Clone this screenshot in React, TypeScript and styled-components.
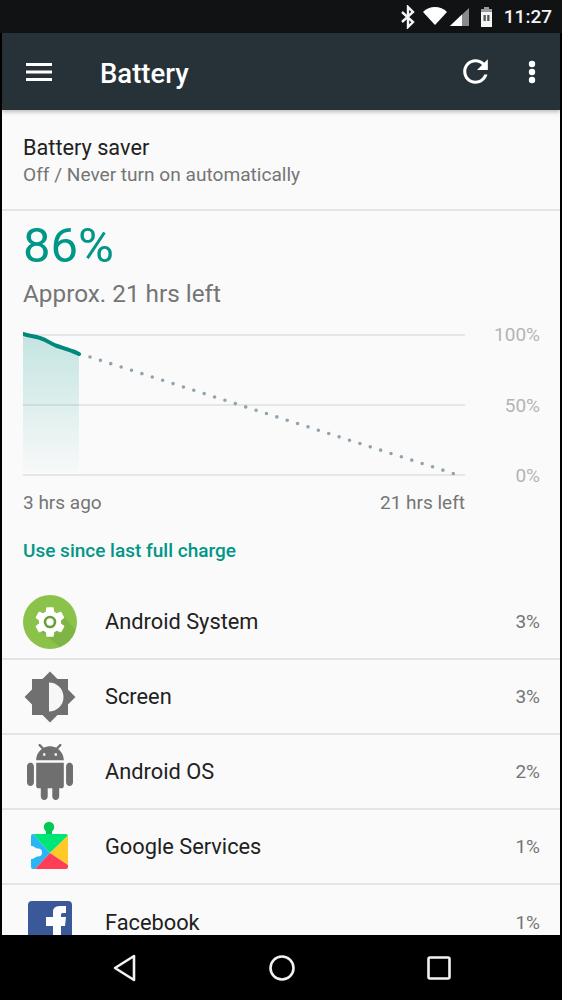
import * as React from 'react';
import styled, { createGlobalStyle } from 'styled-components';

const GlobalStyle = createGlobalStyle`
  html, body {
    margin: 0;
    padding: 0;
    background: #000;
  }
  body {
    font-family: Roboto, "Noto Sans", sans-serif;
  }
`;

const Screen = styled.div`
  width: 562px;
  height: 1000px;
  display: flex;
  flex-direction: column;
  overflow: hidden;
  background: #000;
`;

const StatusBar = styled.div`
  height: 33px;
  flex-shrink: 0;
  padding: 0 10px 0 0;
  display: flex;
  justify-content: flex-end;
  align-items: center;
  background: #101214;
  color: #f4f4f4;
`;

const StatusIcon = styled.svg<{ $gap?: number }>`
  display: block;
  margin-right: ${({ $gap }) => $gap ?? 0}px;
`;

const Clock = styled.span`
  font-size: 19px;
  font-weight: 500;
  margin-left: 11px;
`;

const AppBar = styled.div`
  height: 77px;
  flex-shrink: 0;
  margin: 0 2px;
  display: flex;
  align-items: center;
  padding: 0 24px;
  background: #263238;
  color: #fff;
  position: relative;
  z-index: 1;
  box-shadow: 0 2px 4px rgba(0, 0, 0, 0.25);
`;

const Title = styled.div`
  flex: 1;
  margin-left: 48px;
  padding-top: 3px;
  font-size: 27.5px;
  font-weight: 500;
`;

const AppBarIcon = styled.svg<{ $left?: number }>`
  display: block;
  flex-shrink: 0;
  margin-left: ${({ $left }) => $left ?? 0}px;
`;

const Content = styled.div`
  flex: 1;
  min-height: 0;
  margin: 0 2px;
  overflow: hidden;
  background: #fafafa;
`;

const SaverSection = styled.div`
  height: 101px;
  box-sizing: border-box;
  padding: 24px 21px 0;
  border-bottom: 2px solid #e4e4e4;
`;

const SaverTitle = styled.div`
  font-size: 21.7px;
  line-height: 28px;
  color: #212121;
`;

const SaverSub = styled.div`
  font-size: 19.1px;
  line-height: 26px;
  color: #757575;
`;

const ChargeSection = styled.div`
  padding: 0 20px 0 21px;
`;

const Percent = styled.div`
  margin-top: 5px;
  font-size: 49px;
  line-height: 60px;
  color: #009688;
`;

const Estimate = styled.div`
  margin-top: 2px;
  font-size: 24.3px;
  line-height: 32px;
  color: #757575;
`;

const ChartGrid = styled.div`
  margin-top: 15px;
  display: grid;
  grid-template-columns: 442px 1fr;
  column-gap: 12px;
`;

const ChartSvg = styled.svg`
  display: block;
`;

const AxisPercents = styled.div`
  height: 163px;
  margin-top: -1px;
  display: flex;
  flex-direction: column;
  justify-content: space-between;
  align-items: flex-end;
  font-size: 19px;
  line-height: 22px;
  color: #b4b4b4;
`;

const AxisTimes = styled.div`
  width: 442px;
  margin-top: 3px;
  display: flex;
  justify-content: space-between;
  font-size: 19px;
  line-height: 24px;
  color: #757575;
`;

const SectionLabel = styled.div`
  margin-top: 24px;
  font-size: 19px;
  line-height: 24px;
  font-weight: 500;
  color: #009688;
`;

const UsageList = styled.div`
  margin-top: 22px;
`;

const UsageRow = styled.div`
  height: 75px;
  box-sizing: border-box;
  padding: 0 20px 0 21px;
  display: flex;
  align-items: center;
  border-bottom: 2px solid #e4e4e4;
  &:last-child {
    border-bottom: 0;
  }
`;

const IconSlot = styled.div`
  width: 54px;
  height: 56px;
  margin-right: 28px;
  display: flex;
  align-items: center;
  justify-content: center;
  flex-shrink: 0;
`;

const AppName = styled.div`
  flex: 1;
  font-size: 21.8px;
  color: #212121;
`;

const AppShare = styled.div`
  font-size: 19px;
  color: #757575;
`;

const NavBar = styled.div`
  height: 65px;
  flex-shrink: 0;
  display: flex;
  align-items: center;
  background: #000;
`;

const NavSlot = styled.div<{ $left: number }>`
  margin-left: ${({ $left }) => $left}px;
  display: flex;
`;

const GearIcon = () => (
  <svg width="54" height="54" viewBox="0 0 54 54">
    <circle cx="27" cy="27" r="27" fill="#8bc34a" />
    <path d="M38 17 L52.5 35.5 A27 27 0 0 1 37 52 L18 37 Z" fill="#7fb545" />
    <g transform="translate(8.5 8.5) scale(1.54)">
      <path
        fill="#fff"
        d="M19.14 12.94c.04-.3.06-.61.06-.94 0-.32-.02-.64-.07-.94l2.03-1.58a.49.49 0 0 0 .12-.61l-1.92-3.32a.488.488 0 0 0-.59-.22l-2.39.96c-.5-.38-1.03-.7-1.62-.94l-.36-2.54a.484.484 0 0 0-.48-.41h-3.84c-.24 0-.43.17-.47.41l-.36 2.54c-.59.24-1.13.57-1.62.94l-2.39-.96c-.22-.08-.47 0-.59.22L2.74 8.87c-.12.21-.08.47.12.61l2.03 1.58c-.05.3-.07.62-.07.94s.02.64.07.94l-2.03 1.58a.49.49 0 0 0-.12.61l1.92 3.32c.12.22.37.29.59.22l2.39-.96c.5.38 1.03.7 1.62.94l.36 2.54c.05.24.24.41.48.41h3.84c.24 0 .44-.17.47-.41l.36-2.54c.59-.24 1.13-.56 1.62-.94l2.39.96c.22.08.47 0 .59-.22l1.92-3.32c.12-.22.07-.47-.12-.61l-2.01-1.58z"
      />
    </g>
    <circle cx="27" cy="27" r="5" fill="#fff" stroke="#689f38" strokeWidth="2.6" />
  </svg>
);

const BrightnessIcon = () => (
  <svg width="54" height="54" viewBox="0 0 54 54">
    <g fill="#707070">
      <rect x="9" y="9" width="36" height="36" />
      <rect x="9" y="9" width="36" height="36" transform="rotate(45 27 27)" />
    </g>
    <path d="M26 12.5 A14.5 14.5 0 0 1 26 41.5 Z" fill="#f7f7f7" />
  </svg>
);

const AndroidIcon = () => (
  <svg width="46" height="56" viewBox="2 0 20 24" preserveAspectRatio="none">
    <path
      fill="#6f6f6f"
      d="M6 18c0 .55.45 1 1 1h1v3.5c0 .83.67 1.5 1.5 1.5s1.5-.67 1.5-1.5V19h2v3.5c0 .83.67 1.5 1.5 1.5s1.5-.67 1.5-1.5V19h1c.55 0 1-.45 1-1V8H6v10zM3.5 8C2.67 8 2 8.67 2 9.5v7c0 .83.67 1.5 1.5 1.5S5 17.33 5 16.5v-7C5 8.67 4.33 8 3.5 8zm17 0c-.83 0-1.5.67-1.5 1.5v7c0 .83.67 1.5 1.5 1.5s1.5-.67 1.5-1.5v-7c0-.83-.67-1.5-1.5-1.5zm-4.97-5.84l1.3-1.3c.2-.2.2-.51 0-.71-.2-.2-.51-.2-.71 0l-1.48 1.48C13.85 1.23 12.95 1 12 1c-.96 0-1.86.23-2.66.63L7.85.15c-.2-.2-.51-.2-.71 0-.2.2-.2.51 0 .71l1.31 1.31C6.97 3.26 6 5.01 6 7h12c0-1.99-.97-3.75-2.47-4.84zM10 5H9V4h1v1zm5 0h-1V4h1v1z"
    />
  </svg>
);

const PlayServicesIcon = () => (
  <svg width="54" height="56" viewBox="0 0 54 56">
    <circle cx="26" cy="8" r="5.2" fill="#00c853" />
    <rect x="23" y="10" width="6" height="7" fill="#00c853" />
    <path d="M10 15 H43 Q44.5 15 45 16.5 L27 34 Z" fill="#00e676" />
    <path d="M8 17 Q8 15 10 15 L27 34 L12 50 H10 Q8 50 8 48 Z" fill="#29b6f6" />
    <path d="M45 16.5 V46 L27 34 Z" fill="#ffc928" />
    <path d="M27 34 L45 46 V48 Q45 50 43 50 H12 Z" fill="#ff3d57" />
    <path
      d="M8 27 C12 27 12 29.5 15 29.5 A4 4 0 0 1 15 37.5 C12 37.5 12 40 8 40 Z"
      fill="#fafafa"
    />
  </svg>
);

const FacebookIcon = () => (
  <svg width="44" height="44" viewBox="0 0 44 44">
    <rect width="44" height="44" rx="4" fill="#3b5998" />
    <path
      d="M25 44 V25 H18 V16 H25 V11 C25 6 28 5 34 5 H38 V12 H35 C33 12 33 13 33 15 V16 H38 L37 25 H33 V44 Z"
      fill="#fff"
    />
  </svg>
);

const apps = [
  { name: 'Android System', share: '3%', icon: <GearIcon /> },
  { name: 'Screen', share: '3%', icon: <BrightnessIcon /> },
  { name: 'Android OS', share: '2%', icon: <AndroidIcon /> },
  { name: 'Google Services', share: '1%', icon: <PlayServicesIcon /> },
  { name: 'Facebook', share: '1%', icon: <FacebookIcon /> },
];

const usedCurve = 'M0 9 C6 11 12 11 17 13 C24 15 28 19 34 21 C40 23 44 24 49 26 C52 27 54 28 56 29';

const App: React.FC = () => {
  return (
    <Screen>
      <GlobalStyle />
      <StatusBar>
        <StatusIcon width="18" height="24" viewBox="0 0 18 24" $gap={6}>
          <path
            d="M3 7 L14 17 L9 22 V2 L14 7 L3 17"
            fill="none"
            stroke="#f4f4f4"
            strokeWidth="2.4"
          />
        </StatusIcon>
        <StatusIcon width="24" height="20" viewBox="0 0 24 20" $gap={3}>
          <path d="M12 18 L0 5 A17 17 0 0 1 24 5 Z" fill="#fff" />
        </StatusIcon>
        <StatusIcon width="20" height="20" viewBox="0 0 20 20" $gap={10}>
          <path d="M0 19 L19 1 V19 Z" fill="#8a8a8a" />
          <path d="M0 19 L12 7.6 V19 Z" fill="#fff" />
        </StatusIcon>
        <StatusIcon width="13" height="22" viewBox="0 0 13 22">
          <path d="M4 1 H9 V3 H12 V21 H1 V3 H4 Z" fill="#f4f4f4" />
          <path d="M4 1 H9 V3 H12 V6 H1 V3 H4 Z" fill="#9a9a9a" />
          <rect x="3.5" y="9" width="2.3" height="6" fill="#555" />
          <rect x="7.2" y="9" width="2.3" height="6" fill="#555" />
        </StatusIcon>
        <Clock>11:27</Clock>
      </StatusBar>
      <AppBar>
        <AppBarIcon width="26" height="18" viewBox="0 0 26 18">
          <path d="M0 1.5 H26 M0 9 H26 M0 16.5 H26" stroke="#fff" strokeWidth="3" />
        </AppBarIcon>
        <Title>Battery</Title>
        <AppBarIcon width="37" height="37" viewBox="0 0 24 24">
          <path
            fill="#fff"
            d="M17.65 6.35C16.2 4.9 14.21 4 12 4c-4.42 0-7.99 3.58-7.99 8s3.57 8 7.99 8c3.73 0 6.84-2.55 7.73-6h-2.08c-.82 2.33-3.04 4-5.65 4-3.31 0-6-2.69-6-6s2.69-6 6-6c1.66 0 3.14.69 4.22 1.78L13 11h7V4l-2.35 2.35z"
          />
        </AppBarIcon>
        <AppBarIcon width="8" height="24" viewBox="0 0 8 24" $left={34}>
          <circle cx="4" cy="4" r="3.2" fill="#fff" />
          <circle cx="4" cy="12" r="3.2" fill="#fff" />
          <circle cx="4" cy="20" r="3.2" fill="#fff" />
        </AppBarIcon>
      </AppBar>
      <Content>
        <SaverSection>
          <SaverTitle>Battery saver</SaverTitle>
          <SaverSub>Off / Never turn on automatically</SaverSub>
        </SaverSection>
        <ChargeSection>
          <Percent>86%</Percent>
          <Estimate>Approx. 21 hrs left</Estimate>
          <ChartGrid>
            <ChartSvg width="442" height="163" viewBox="0 0 442 163">
              <defs>
                <linearGradient id="used" x1="0" y1="0" x2="0" y2="1">
                  <stop offset="0" stopColor="#009688" stopOpacity="0.22" />
                  <stop offset="1" stopColor="#009688" stopOpacity="0.01" />
                </linearGradient>
              </defs>
              <path d="M0 10 H442 M0 80 H442 M0 150 H442" stroke="#e6e6e6" strokeWidth="2" />
              <path d={`${usedCurve} V148 H0 Z`} fill="url(#used)" />
              <path
                d={usedCurve}
                fill="none"
                stroke="#00897b"
                strokeWidth="4"
                strokeLinecap="round"
              />
              <path
                d="M67 32 L432 149"
                fill="none"
                stroke="#90a4ae"
                strokeWidth="3.6"
                strokeLinecap="round"
                strokeDasharray="0 10.9"
              />
            </ChartSvg>
            <AxisPercents>
              <span>100%</span>
              <span>50%</span>
              <span>0%</span>
            </AxisPercents>
          </ChartGrid>
          <AxisTimes>
            <span>3 hrs ago</span>
            <span>21 hrs left</span>
          </AxisTimes>
          <SectionLabel>Use since last full charge</SectionLabel>
        </ChargeSection>
        <UsageList>
          {apps.map((app) => (
            <UsageRow key={app.name}>
              <IconSlot>{app.icon}</IconSlot>
              <AppName>{app.name}</AppName>
              <AppShare>{app.share}</AppShare>
            </UsageRow>
          ))}
        </UsageList>
      </Content>
      <NavBar>
        <NavSlot $left={113}>
          <svg width="24" height="28" viewBox="0 0 24 28">
            <path
              d="M21 2 V26 L2 14 Z"
              fill="none"
              stroke="#f2f2f2"
              strokeWidth="2.6"
              strokeLinejoin="round"
            />
          </svg>
        </NavSlot>
        <NavSlot $left={132}>
          <svg width="26" height="26" viewBox="0 0 26 26">
            <circle cx="13" cy="13" r="11.5" fill="none" stroke="#f2f2f2" strokeWidth="2.6" />
          </svg>
        </NavSlot>
        <NavSlot $left={132}>
          <svg width="24" height="24" viewBox="0 0 24 24">
            <rect x="1.5" y="1.5" width="21" height="21" rx="1.5" fill="none" stroke="#f2f2f2" strokeWidth="2.6" />
          </svg>
        </NavSlot>
      </NavBar>
    </Screen>
  );
};

export default App;
